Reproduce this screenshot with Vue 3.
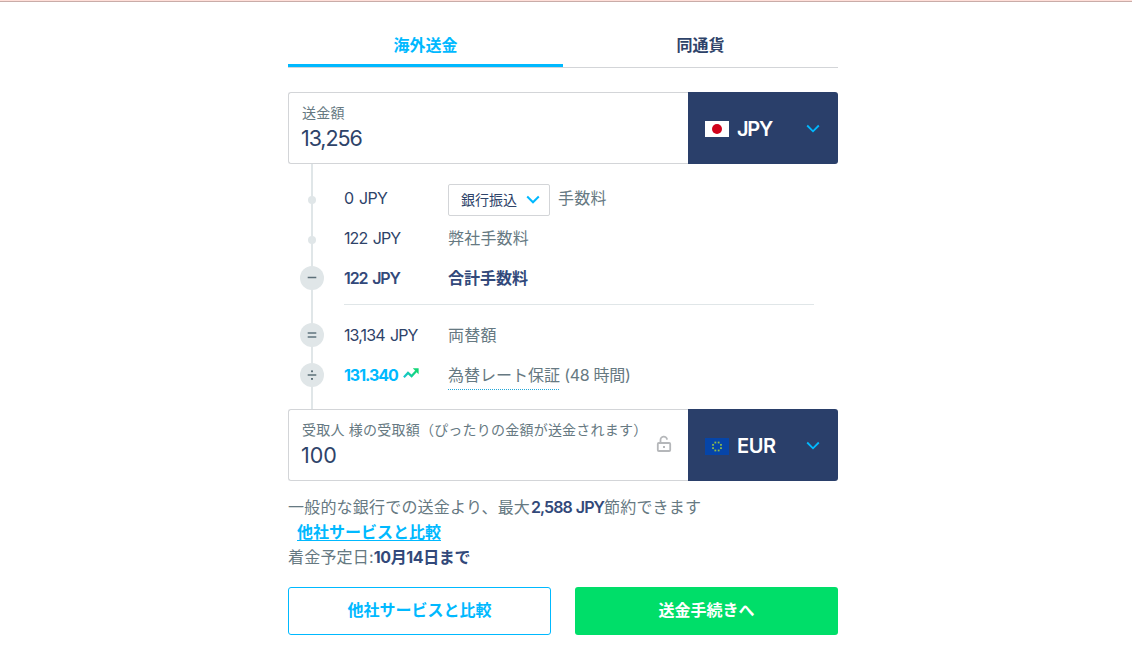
<script setup>
const chevron = 'M1.2 1.5 7 7.3 12.8 1.5'
const stars = Array.from({ length: 8 }, (_, i) => ({
  x: 12 + 4.3 * Math.cos((i * Math.PI) / 4 + Math.PI / 8) - 0.9,
  y: 8.5 + 4.3 * Math.sin((i * Math.PI) / 4 + Math.PI / 8) - 0.9,
}))
</script>

<template>
  <main class="page">
    <div class="notice"></div>
    <section class="calc">
      <nav class="tabs">
        <a class="tab active">海外送金</a>
        <a class="tab">同通貨</a>
      </nav>

      <div class="field">
        <div class="entry">
          <div class="label">送金額</div>
          <div class="value send">13,256</div>
        </div>
        <button class="currency">
          <svg class="flag" width="24" height="16" viewBox="0 0 24 16">
            <rect width="24" height="16" fill="#fff" />
            <circle cx="12" cy="8" r="5" fill="#d0021b" />
          </svg>
          <span class="code jpy">JPY</span>
          <svg class="chev" width="14" height="9" viewBox="0 0 14 9"><path :d="chevron" /></svg>
        </button>
      </div>

      <div class="steps">
        <div class="row first">
          <span class="node"><i class="dot"></i></span>
          <span class="amount zero">0 JPY</span>
          <span class="method">
            <span>銀行振込</span>
            <svg class="chev" width="14" height="9" viewBox="0 0 14 9"><path :d="chevron" /></svg>
          </span>
          <span class="desc fee">手数料</span>
        </div>
        <div class="row">
          <span class="node"><i class="dot"></i></span>
          <span class="amount">122 JPY</span>
          <span class="desc">弊社手数料</span>
        </div>
        <div class="row strong">
          <span class="node">
            <svg class="badge" viewBox="0 0 24 24"><path d="M7.7 11.5h8.6" /></svg>
          </span>
          <span class="amount total">122 JPY</span>
          <span class="desc">合計手数料</span>
        </div>
        <div class="rule"></div>
        <div class="row">
          <span class="node">
            <svg class="badge" viewBox="0 0 24 24"><path class="soft" d="M7.7 10h8.6M7.7 14h8.6" /></svg>
          </span>
          <span class="amount">13,134 JPY</span>
          <span class="desc">両替額</span>
        </div>
        <div class="row">
          <span class="node">
            <svg class="badge" viewBox="0 0 24 24">
              <path d="M7.7 12h8.6" />
              <rect x="11" y="7.4" width="2" height="1.8" />
              <rect x="11" y="15" width="2" height="1.8" />
            </svg>
          </span>
          <span class="amount rate"><span class="rate-text">131.340</span>
            <svg width="16" height="11" viewBox="0 0 16 11">
              <defs>
                <linearGradient id="trend" x1="0" x2="1">
                  <stop offset="0" stop-color="#18c5d0" />
                  <stop offset="1" stop-color="#12d677" />
                </linearGradient>
              </defs>
              <path d="M.9 9.2 5 4.9l3.6 3.2 4.7-5" fill="none" stroke="url(#trend)" stroke-width="2.2" />
              <path d="M9.8.3H15.6V6.2z" fill="#12d677" />
            </svg>
          </span>
          <span class="desc"><span class="hint">為替レート保証</span><span class="hours"> (48 時間)</span></span>
        </div>
      </div>

      <div class="field">
        <div class="entry">
          <div class="label">受取人 様の受取額（ぴったりの金額が送金されます）</div>
          <div class="value hundred">100</div>
          <svg class="lock" width="16" height="18" viewBox="0 0 16 18">
            <rect x="1.8" y="8" width="12.4" height="8" rx="1" />
            <path d="M4.5 8V5.2a3.3 3.3 0 0 1 6.6-.6" />
            <rect class="hole" x="7" y="11" width="2" height="2" />
          </svg>
        </div>
        <button class="currency">
          <svg class="flag" width="24" height="17" viewBox="0 0 24 17">
            <rect width="24" height="17" fill="#0645a8" />
            <rect v-for="(s, i) in stars" :key="i" :x="s.x" :y="s.y" width="1.8" height="1.8" fill="#8fbc4a" />
          </svg>
          <span class="code">EUR</span>
          <svg class="chev" width="14" height="9" viewBox="0 0 14 9"><path :d="chevron" /></svg>
        </button>
      </div>

      <div class="summary">
        <div>一般的な銀行での送金より、最大<b class="saving">2,588 JPY</b>節約できます</div>
        <div><a class="compare">他社サービスと比較</a></div>
        <div>着金予定日:<b class="date">10月14日まで</b></div>
      </div>

      <div class="actions">
        <button class="btn outline">他社サービスと比較</button>
        <button class="btn solid">送金手続きへ</button>
      </div>
    </section>
  </main>
</template>

<style>
body {
  background: #fff;
}
</style>

<style scoped>
* {
  box-sizing: border-box;
}
.page {
  height: 659px;
  overflow: hidden;
  font-family: Inter, "Noto Sans CJK JP", sans-serif;
  font-size: 16px;
  color: #667982;
}
.notice {
  height: 2px;
  background: #ffdfd9;
  border-bottom: 1px solid #c9aca8;
}
.calc {
  width: 550px;
  margin-left: 288px;
}
button {
  font: inherit;
  padding: 0;
  border: 0;
}
.tabs {
  display: flex;
  height: 66px;
  border-bottom: 1px solid #d3d5d8;
}
.tab {
  width: 275px;
  height: 65px;
  padding-top: 31px;
  line-height: 24px;
  text-align: center;
  font-weight: 700;
  color: #2e4369;
}
.tab.active {
  color: #00b9ff;
  border-bottom: 3px solid #00b9ff;
}
.field {
  display: flex;
  height: 72px;
}
.tabs + .field {
  margin-top: 24px;
}
.entry {
  position: relative;
  width: 400px;
  padding: 10px 0 0 13px;
  border: 1px solid #d3d5d8;
  border-right: 0;
  border-radius: 3px 0 0 3px;
  white-space: nowrap;
}
.label {
  height: 19px;
  line-height: 19px;
  font-size: 14px;
  letter-spacing: 0.22px;
}
.value {
  margin-left: -1px;
  line-height: 32px;
  font-size: 21.5px;
  letter-spacing: -1.1px;
  color: #2e4369;
}
.hundred {
  letter-spacing: 0;
}
.currency {
  display: flex;
  align-items: center;
  width: 150px;
  padding: 2px 18px 0 17px;
  background: #2a3f6a;
  border-radius: 0 3px 3px 0;
  color: #fff;
}
.code {
  width: 60px;
  margin-left: 8px;
  text-align: left;
  font-size: 20px;
  line-height: 28px;
  font-weight: 600;
  letter-spacing: -0.4px;
}
.code.jpy {
  letter-spacing: -1.3px;
}
.currency .chev {
  margin: -1px 0 0 auto;
  stroke-width: 1.8;
}
.chev {
  flex: none;
  fill: none;
  stroke: #00b9ff;
  stroke-width: 2;
}
.lock {
  position: absolute;
  right: 16px;
  top: 25px;
  fill: none;
  stroke: #b5b7ba;
  stroke-width: 1.8;
}
.lock .hole {
  fill: #b5b7ba;
  stroke: none;
}
.steps {
  height: 245px;
  padding-top: 14px;
  background: linear-gradient(#e0e6e8, #e0e6e8) 23px 0 / 2px 100% no-repeat;
}
.row {
  display: flex;
  align-items: center;
  height: 40px;
  line-height: 24px;
  white-space: nowrap;
}
.node {
  display: flex;
  justify-content: center;
  width: 24px;
  margin: 0 20px 0 12px;
}
.dot {
  width: 8px;
  height: 8px;
  margin-top: 3px;
  border-radius: 50%;
  background: #e0e6e8;
}
.badge {
  width: 24px;
  height: 24px;
  border-radius: 50%;
  background: #e0e6e8;
  fill: #5d7079;
  stroke: none;
}
.badge path {
  stroke: #5d7079;
  stroke-width: 1.3;
}
.badge .soft {
  stroke: #7f9098;
  stroke-width: 2;
}
.amount {
  width: 104px;
  color: #2e4369;
  letter-spacing: -0.9px;
  word-spacing: 1.8px;
}
.zero {
  letter-spacing: -0.7px;
}
.desc {
  letter-spacing: 0.2px;
}
.strong .desc,
.strong .amount {
  font-weight: 700;
  color: #32497a;
}
.strong .amount {
  font-weight: 600;
  letter-spacing: -1.1px;
}
.strong .desc {
  letter-spacing: 0;
}
.method {
  display: flex;
  align-items: center;
  gap: 9px;
  width: 102px;
  height: 32px;
  margin: 3px 8px 0 0;
  padding-left: 12px;
  border: 1px solid #d3d5d8;
  border-radius: 2px;
  font-size: 14px;
  color: #2e4369;
}
.rule {
  height: 1px;
  margin: 6px 24px 10px 56px;
  background: #e0e6e8;
}
.rate {
  display: flex;
  align-items: center;
  gap: 5px;
  font-weight: 700;
  letter-spacing: -1.05px;
  color: #00b9ff;
}
.rate svg {
  margin-top: -3px;
}
.hint {
  display: inline-block;
  height: 27px;
  margin-top: 3px;
  letter-spacing: 0;
  background: repeating-linear-gradient(90deg, #21a6d8 0 1px, transparent 1px 2px) 0 100% / 100% 1px no-repeat;
}
.hours {
  white-space: pre;
  letter-spacing: -0.3px;
}
.summary {
  padding-top: 14px;
  line-height: 25px;
  letter-spacing: 0.2px;
  white-space: nowrap;
}
.summary b {
  font-weight: 700;
  color: #32497a;
}
.summary .saving {
  margin-left: 1px;
  font-weight: 600;
  letter-spacing: -0.95px;
  word-spacing: 1px;
}
.date {
  letter-spacing: -0.4px;
}
.compare {
  margin-left: 9px;
  font-weight: 700;
  letter-spacing: 0;
  color: #00b9ff;
  text-decoration: underline;
  text-underline-offset: 2px;
  text-decoration-thickness: 1px;
}
.actions {
  display: flex;
  gap: 24px;
  margin-top: 17px;
}
.btn {
  width: 263px;
  height: 48px;
  padding-bottom: 4px;
  border-radius: 3px;
  font-weight: 700;
}
.outline {
  border: 1px solid #00b9ff;
  background: #fff;
  color: #00b9ff;
}
.solid {
  background: #00de69;
  color: #fff;
}
</style>
